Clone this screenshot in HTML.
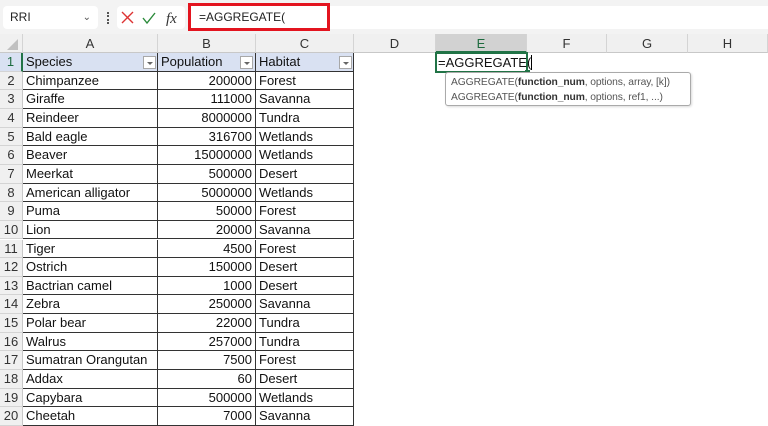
<!DOCTYPE html>
<html><head><meta charset="utf-8"><style>
*{margin:0;padding:0;box-sizing:border-box}
body{width:768px;height:425px;overflow:hidden;background:#fff;font-family:"Liberation Sans",Arial,sans-serif;position:relative}
.top{position:absolute;left:0;top:0;width:768px;height:34px;background:#f3f3f3}
.nb{position:absolute;left:3px;top:6px;width:95px;height:23px;background:#fff;border-radius:4px;font-size:12px;line-height:23px;padding-left:7px;color:#222}
.nb span{position:absolute;right:7px;top:0;font-size:10px;color:#555}
.fx{position:absolute;left:117px;top:6px;width:68px;height:23px;background:#fff;border-radius:4px}
.fb{position:absolute;left:188px;top:3px;width:142px;height:28px;border:3px solid #e3141f;background:#fff;font-size:12px;line-height:22px;padding-left:8px;color:#222}
.fbr{position:absolute;left:330px;top:6px;width:438px;height:23px;background:#fff}
.ch{position:absolute;top:34px;height:19px;background:#f0f0f0;border-right:1px solid #d4d4d4;border-bottom:1px solid #c8c8c8;font-size:13px;text-align:center;line-height:19px;color:#333}
.rh{position:absolute;left:0;width:23px;background:#f0f0f0;border-bottom:1px solid #d4d4d4;border-right:1px solid #c8c8c8;font-size:13px;text-align:center;color:#333}
.c{position:absolute;font-size:13px;color:#111;white-space:nowrap;border-right:1px solid #333;border-bottom:1px solid #333;padding:0 3px;line-height:18px}
.r{text-align:right}
.h{background:#d9e1f2}
.flt{position:absolute;width:13px;height:13px;background:#fff;border:1px solid #a8a8a8}
.flt:after{content:"";position:absolute;left:3px;top:5px;border-left:3px solid transparent;border-right:3px solid transparent;border-top:3px solid #666}
.tip{position:absolute;left:445px;top:72px;width:246px;height:34px;border:1px solid #aaa;border-radius:3px;background:#fff;font-size:10.3px;color:#555;line-height:15px;padding:2px 0 0 5px;box-shadow:1px 1px 2px rgba(0,0,0,.15);white-space:nowrap;letter-spacing:-0.1px}
.tip b{color:#333}
</style></head><body>
<div class="top"></div>
<div class="nb">RRI<span>&#8964;</span></div>
<div style="position:absolute;left:107px;top:12px;width:2px;height:12px;border-left:2px dotted #555"></div>
<div class="fx">
<svg width="68" height="23" style="position:absolute;left:0;top:0"><path d="M5 6l11 11M16 6L5 17" stroke="#d33" stroke-width="1.4"/><path d="M26 12l4 5 8-10" stroke="#2a8a3a" stroke-width="1.4" fill="none"/><text x="49" y="17" font-family="Liberation Serif" font-style="italic" font-size="15" fill="#333">fx</text></svg>
</div>
<div class="fbr"></div>
<div class="fb">=AGGREGATE(</div>

<div class="ch" style="left:0;width:23px"><svg width="22" height="18" style="position:absolute;left:0;top:0"><path d="M18 5L18 16L7 16Z" fill="#c0c0c0"/></svg></div>
<div class="ch" style="left:23px;width:135px">A</div>
<div class="ch" style="left:158px;width:98px">B</div>
<div class="ch" style="left:256px;width:98px">C</div>
<div class="ch" style="left:354px;width:82px">D</div>
<div class="ch" style="left:436px;width:91px;background:#d2d2d2;border-bottom:2px solid #217346;color:#1e6b3f">E</div>
<div class="ch" style="left:527px;width:80px">F</div>
<div class="ch" style="left:607px;width:81px">G</div>
<div class="ch" style="left:688px;width:80px">H</div>

<div id="g"></div>
<script>
var d=[["Species","Population","Habitat"],["Chimpanzee","200000","Forest"],["Giraffe","111000","Savanna"],["Reindeer","8000000","Tundra"],["Bald eagle","316700","Wetlands"],["Beaver","15000000","Wetlands"],["Meerkat","500000","Desert"],["American alligator","5000000","Wetlands"],["Puma","50000","Forest"],["Lion","20000","Savanna"],["Tiger","4500","Forest"],["Ostrich","150000","Desert"],["Bactrian camel","1000","Desert"],["Zebra","250000","Savanna"],["Polar bear","22000","Tundra"],["Walrus","257000","Tundra"],["Sumatran Orangutan","7500","Forest"],["Addax","60","Desert"],["Capybara","500000","Wetlands"],["Cheetah","7000","Savanna"]];
var h="";
for(var i=0;i<20;i++){var t=53+i*18.65,hh=18.65;
var rs=i==0?"background:#d9e1f2;color:#1e6b3f;border-right:2px solid #217346;":"";
h+='<div class="rh" style="top:'+t+'px;height:'+hh+'px;line-height:'+hh+'px;'+rs+'">'+(i+1)+'</div>';
var cls=i==0?" h":"";
h+='<div class="c'+cls+'" style="left:23px;top:'+t+'px;width:135px;height:'+hh+'px">'+d[i][0]+'</div>';
h+='<div class="c'+cls+(i?" r":"")+'" style="left:158px;top:'+t+'px;width:98px;height:'+hh+'px">'+d[i][1]+'</div>';
h+='<div class="c'+cls+'" style="left:256px;top:'+t+'px;width:98px;height:'+hh+'px">'+d[i][2]+'</div>';
}
h+='<div class="flt" style="left:143px;top:56px"></div><div class="flt" style="left:240px;top:56px"></div><div class="flt" style="left:339px;top:56px"></div>';
document.getElementById("g").innerHTML=h;
</script>
<div style="position:absolute;left:435px;top:52px;width:93px;height:21px;border:2px solid #217346;background:#fff"></div>
<div style="position:absolute;left:438px;top:54px;font-size:13px;line-height:17px;color:#111;white-space:nowrap">=AGGREGATE(<span style="display:inline-block;width:1px;height:15px;background:#000;vertical-align:-3px"></span></div>
<div style="position:absolute;left:525px;top:70px;width:5px;height:5px;background:#217346"></div>
<div class="tip">AGGREGATE(<b>function_num</b>, options, array, [k])<br>AGGREGATE(<b>function_num</b>, options, ref1, ...)</div>
</body></html>
